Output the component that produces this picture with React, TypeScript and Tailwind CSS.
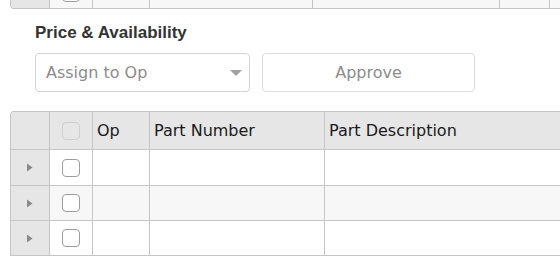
import React from "react";

const B = "border-[#c5c5c5]";

function Check({ disabled = false }: { disabled?: boolean }) {
  return (
    <div
      className={
        disabled
          ? "w-[18px] h-[18px] rounded-[4px] border border-[#cfcfcf]"
          : "w-[18px] h-[18px] rounded-[4px] border border-[#9c9c9c] bg-white"
      }
    />
  );
}

function Arrow() {
  return (
    <svg width="6" height="9" viewBox="0 0 6 9">
      <polygon points="0,0.5 5.5,4.5 0,8.5" fill="#8a8a8a" />
    </svg>
  );
}

function Row({ alt, h }: { alt?: boolean; h: string }) {
  const bg = alt ? "bg-[#f7f7f7]" : "bg-white";
  return (
    <div className={`flex ${h} border-b ${B}`}>
      <div className={`w-[39px] shrink-0 border-r ${B} bg-[#e6e6e6] flex items-center pl-[16px]`}>
        <Arrow />
      </div>
      <div className={`w-[43px] shrink-0 border-r ${B} ${bg} flex items-center justify-center`}>
        <Check />
      </div>
      <div className={`w-[57px] shrink-0 border-r ${B} ${bg}`} />
      <div className={`w-[175px] shrink-0 border-r ${B} ${bg}`} />
      <div className={`flex-1 ${bg}`} />
    </div>
  );
}

export default function App() {
  return (
    <div
      className="w-[560px] h-[256px] overflow-hidden bg-white"
      style={{ fontFamily: '"DejaVu Sans", sans-serif' }}
    >
      {/* previous grid (cut off at top) */}
      <div className={`ml-[10px] -mt-[27px] h-[36px] flex border-l border-b ${B} rounded-bl-[4px] overflow-hidden`}>
        <div className={`w-[39px] shrink-0 border-r ${B} bg-[#e6e6e6]`} />
        <div className={`w-[43px] shrink-0 border-r ${B} bg-[#f7f7f7] flex items-end justify-center pb-[6px]`}>
          <Check />
        </div>
        <div className={`w-[57px] shrink-0 border-r ${B} bg-[#f7f7f7]`} />
        <div className={`w-[163px] shrink-0 border-r ${B} bg-[#f7f7f7]`} />
        <div className={`w-[187px] shrink-0 border-r ${B} bg-[#f7f7f7]`} />
        <div className={`w-[50px] shrink-0 border-r ${B} bg-[#f7f7f7]`} />
        <div className="flex-1 bg-[#f7f7f7]" />
      </div>

      {/* Section */}
      <div className="pl-[35px]">
        <div
          className="mt-[13px] text-[17px] leading-[21px] font-bold text-[#333333]"
          style={{ fontFamily: '"Liberation Sans", Arial, sans-serif' }}
        >
          Price &amp; Availability
        </div>
        <div className="mt-[10px] flex gap-[12px]">
          <div className="w-[215px] h-[39px] rounded-[4px] border border-[#d3d3d3] bg-white flex items-center pl-[10px] pr-[7px] justify-between">
            <span className="text-[16px] text-[#8c8c8c]">Assign to Op</span>
            <svg width="12" height="6" viewBox="0 0 12 6">
              <polygon points="0,0 12,0 6,6" fill="#a0a0a0" />
            </svg>
          </div>
          <div className="w-[213px] h-[39px] rounded-[4px] border border-[#dcdcdc] bg-white flex items-center justify-center">
            <span className="text-[16px] text-[#8c8c8c]">Approve</span>
          </div>
        </div>
      </div>

      {/* Grid */}
      <div className={`ml-[10px] mt-[19px] border-l border-t ${B} rounded-tl-[4px] overflow-hidden`}>
        <div className={`flex h-[38px] border-b ${B} bg-[#e6e6e6] text-[16px] text-[#1a1a1a]`}>
          <div className={`w-[39px] shrink-0 border-r ${B}`} />
          <div className={`w-[43px] shrink-0 border-r ${B} flex items-center justify-center`}>
            <Check disabled />
          </div>
          <div className={`w-[57px] shrink-0 border-r ${B} flex items-center pl-[4px]`}>Op</div>
          <div className={`w-[175px] shrink-0 border-r ${B} flex items-center pl-[4px]`}>Part Number</div>
          <div className="flex-1 flex items-center pl-[4px]">Part Description</div>
        </div>
        <Row h="h-[36px]" />
        <Row alt h="h-[35px]" />
        <Row h="h-[35px]" />
      </div>
    </div>
  );
}
